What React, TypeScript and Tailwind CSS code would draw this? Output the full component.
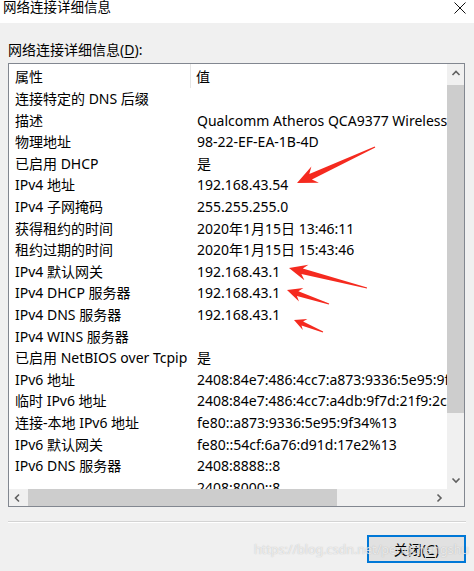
import React from 'react';

interface Row {
  name: string;
  value: string;
}

const rows: Row[] = [
  { name: '连接特定的 DNS 后缀', value: '' },
  { name: '描述', value: 'Qualcomm Atheros QCA9377 Wireless Network Adapter' },
  { name: '物理地址', value: '98-22-EF-EA-1B-4D' },
  { name: '已启用 DHCP', value: '是' },
  { name: 'IPv4 地址', value: '192.168.43.54' },
  { name: 'IPv4 子网掩码', value: '255.255.255.0' },
  { name: '获得租约的时间', value: '2020年1月15日 13:46:11' },
  { name: '租约过期的时间', value: '2020年1月15日 15:43:46' },
  { name: 'IPv4 默认网关', value: '192.168.43.1' },
  { name: 'IPv4 DHCP 服务器', value: '192.168.43.1' },
  { name: 'IPv4 DNS 服务器', value: '192.168.43.1' },
  { name: 'IPv4 WINS 服务器', value: '' },
  { name: '已启用 NetBIOS over Tcpip', value: '是' },
  { name: 'IPv6 地址', value: '2408:84e7:486:4cc7:a873:9336:5e95:9f34' },
  { name: '临时 IPv6 地址', value: '2408:84e7:486:4cc7:a4db:9f7d:21f9:2c3e' },
  { name: '连接-本地 IPv6 地址', value: 'fe80::a873:9336:5e95:9f34%13' },
  { name: 'IPv6 默认网关', value: 'fe80::54cf:6a76:d91d:17e2%13' },
  { name: 'IPv6 DNS 服务器', value: '2408:8888::8' },
  { name: '', value: '2408:8000::8' },
];

// red annotation arrows: tail -> tip, head length, head half width
const arrows = [
  { tx: 375, ty: 147, px: 297, py: 183, hl: 20, hw: 9 },
  { tx: 367, ty: 288, px: 289, py: 268, hl: 18, hw: 8 },
  { tx: 329, ty: 304, px: 287, py: 290, hl: 15, hw: 7 },
  { tx: 323, ty: 332, px: 294, py: 320, hl: 12, hw: 6 },
];

function arrowPoints(a: (typeof arrows)[number]) {
  const dx = a.px - a.tx;
  const dy = a.py - a.ty;
  const len = Math.hypot(dx, dy);
  const ux = dx / len;
  const uy = dy / len;
  const nx = -uy;
  const ny = ux;
  const neck = a.hl * 0.75;
  const bx = a.px - ux * a.hl;
  const by = a.py - uy * a.hl;
  const kx = a.px - ux * neck;
  const ky = a.py - uy * neck;
  const sw = a.hw * 0.35;
  const pts = [
    [a.tx + nx * 0.6, a.ty + ny * 0.6],
    [kx + nx * sw, ky + ny * sw],
    [bx + nx * a.hw, by + ny * a.hw],
    [a.px, a.py],
    [bx - nx * a.hw, by - ny * a.hw],
    [kx - nx * sw, ky - ny * sw],
    [a.tx - nx * 0.6, a.ty - ny * 0.6],
  ];
  return pts.map(p => `${p[0].toFixed(1)},${p[1].toFixed(1)}`).join(' ');
}

function Chevron({ dir }: { dir: 'up' | 'down' | 'left' | 'right' }) {
  const d =
    dir === 'up' ? 'M1.5 6 L5 2.5 L8.5 6' :
    dir === 'down' ? 'M1.5 3.5 L5 7 L8.5 3.5' :
    dir === 'left' ? 'M6 1.5 L2.5 5 L6 8.5' :
    'M3.5 1.5 L7 5 L3.5 8.5';
  return (
    <svg width="10" height="10" viewBox="0 0 10 10">
      <path d={d} fill="none" stroke="#606060" strokeWidth="1.6" />
    </svg>
  );
}

export default function App() {
  return (
    <div
      className="relative w-[474px] h-[571px] bg-[#f0f0f0] overflow-hidden text-black"
      style={{ fontFamily: '"Noto Sans", "Noto Sans CJK SC", sans-serif' }}
    >
      {/* title bar */}
      <div className="h-[23px] bg-white flex justify-between items-start">
        <div className="pl-[3px] text-[13.5px] leading-[14px]">网络连接详细信息</div>
        <svg width="12" height="12" viewBox="0 0 12 12" className="mt-[2px] mr-[8px]">
          <path d="M0.5 0.5 L11.5 11.5 M11.5 0.5 L0.5 11.5" stroke="#111" strokeWidth="1" />
        </svg>
      </div>

      <div className="px-[8px]">
        <div className="mt-[16px] h-[22px] text-[14px] leading-[22px]">
          网络连接详细信息(<span className="underline underline-offset-2">D</span>):
        </div>

        {/* list box */}
        <div className="mt-[2px] w-[457px] h-[444px] border border-[#828790] bg-white grid grid-cols-[438px_17px] grid-rows-[425px_17px]">
          <div className="overflow-hidden text-[14px]">
            <div className="flex h-[24px] items-center whitespace-nowrap">
              <div className="w-[182px] h-full flex items-center pl-[6px] border-r border-[#e5e5e5]">属性</div>
              <div className="pl-[5px]">值</div>
            </div>
            {rows.map((r, i) => (
              <div key={i} className="flex h-[21.6px] leading-[21.6px] whitespace-nowrap">
                <div className="w-[182px] shrink-0 pl-[6px]">{r.name}</div>
                <div className="pl-[6px]">{r.value}</div>
              </div>
            ))}
          </div>

          {/* vertical scrollbar */}
          <div className="bg-[#f0f0f0] flex flex-col items-center">
            <div className="h-[17px] w-full flex items-center justify-center mt-[1px]">
              <Chevron dir="up" />
            </div>
            <div className="mt-[3px] w-full h-[328px] bg-[#cdcdcd]" />
            <div className="flex-1" />
            <div className="h-[17px] w-full flex items-center justify-center mb-[1px]">
              <Chevron dir="down" />
            </div>
          </div>

          {/* horizontal scrollbar */}
          <div className="bg-[#f0f0f0] flex items-center">
            <div className="w-[17px] h-full flex items-center justify-center">
              <Chevron dir="left" />
            </div>
            <div className="ml-[2px] w-[309px] h-full bg-[#cdcdcd]" />
            <div className="flex-1" />
            <div className="w-[17px] h-full flex items-center justify-center">
              <Chevron dir="right" />
            </div>
          </div>
          <div className="bg-[#f0f0f0]" />
        </div>

        {/* separator */}
        <div className="mt-[14px] w-[458px] h-[1px] bg-[#d4d4d4]" />
        <div className="w-[458px] h-[1px] bg-white" />

        {/* button */}
        <div className="mt-[12px] flex justify-end w-[458px]">
          <div className="w-[99px] h-[28px] border-2 border-[#0078d7] bg-[#e1e1e1] flex items-center justify-center text-[14px]">
            关闭(<span className="underline underline-offset-2">C</span>)
          </div>
        </div>
      </div>

      {/* watermark */}
      <div
        className="absolute left-[254px] top-[542px] text-[12.5px] leading-[16px] text-white/70 whitespace-nowrap pointer-events-none"
        style={{ textShadow: '0 0 1px rgba(120,120,120,0.5)' }}
      >
        https://blog.csdn.net/pengchengshu
      </div>

      {/* annotation arrows */}
      <svg className="absolute inset-0 pointer-events-none" width="474" height="571" viewBox="0 0 474 571">
        {arrows.map((a, i) => (
          <polygon key={i} points={arrowPoints(a)} fill="#f52a1f" />
        ))}
      </svg>
    </div>
  );
}
